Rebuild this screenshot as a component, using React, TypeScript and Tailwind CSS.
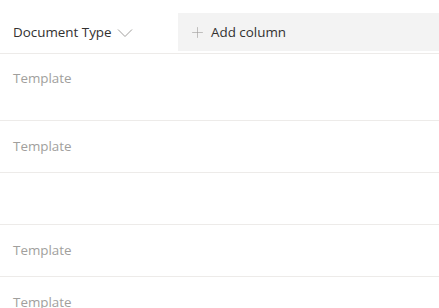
import { Plus } from 'lucide-react';

const rows: { label: string; tall?: boolean }[] = [
    { label: 'Template', tall: true },
    { label: 'Template' },
    { label: '' },
    { label: 'Template' },
    { label: 'Template' },
];

const ChevronDown = () => (
    <svg width="16" height="10" viewBox="0 0 16 10" className="ml-[5px] mt-[1px]">
        <path d="M1 1.5 L8 8.5 L15 1.5" fill="none" stroke="#a19f9d" strokeWidth="1" />
    </svg>
);

export default function App() {
    return (
        <div className="w-[439px] h-[308px] overflow-hidden bg-white text-[13.4px]" style={{ fontFamily: '"Open Sans", "Noto Sans", sans-serif' }}>
            {/* header row */}
            <div className="flex items-stretch h-[54px] pt-[13px] pb-[2px] border-b border-[#edebe9]">
                <div className="w-[178px] flex items-center pl-[13px] text-[#323130]">
                    <span>Document Type</span>
                    <ChevronDown />
                </div>
                <div className="flex-1 flex items-center bg-[#f3f3f3] pl-[11px] text-[#323130]">
                    <Plus size={17} strokeWidth={0.9} className="text-[#a19f9d] mr-[5px]" />
                    <span>Add column</span>
                </div>
            </div>

            {rows.map((row, i) => (
                <div
                    key={i}
                    className={`flex items-start pl-[13px] border-b border-[#edebe9] text-[#a19f9d] ${row.tall ? 'h-[67px] pt-[14px]' : 'h-[52px] pt-[15px]'}`}
                >
                    {row.label}
                </div>
            ))}
        </div>
    );
}
